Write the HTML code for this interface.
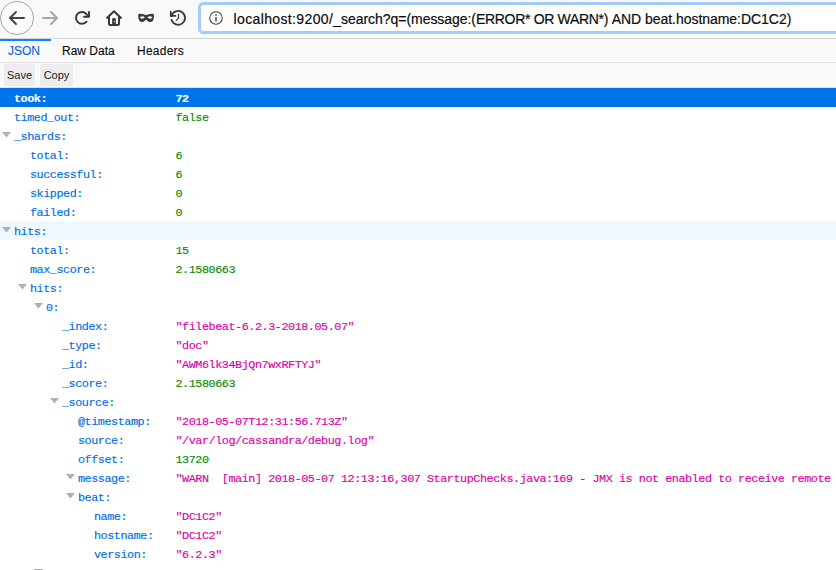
<!DOCTYPE html>
<html><head><meta charset="utf-8">
<style>
html,body{margin:0;padding:0;}
body{width:836px;height:570px;overflow:hidden;background:#fff;position:relative;font-family:"Liberation Sans",sans-serif;}
#nav{position:absolute;left:0;top:0;width:836px;height:39px;background:#f9f9fa;border-bottom:1px solid #d4d4d5;box-sizing:border-box;}
#back{position:absolute;left:0.4px;top:1.2px;width:31.6px;height:31.6px;border:1px solid #a4a4a6;border-radius:50%;background:#fcfcfc;box-sizing:content-box;}
#url{position:absolute;left:198px;top:2px;width:660px;height:32px;box-sizing:border-box;border:3px solid #a1ccfb;border-radius:5.5px;background:#fff;}
#urltext{position:absolute;left:233.5px;top:11px;-webkit-text-stroke:0.2px;font-size:14px;color:#0c0c0d;white-space:nowrap;line-height:16px;}
svg{position:absolute;overflow:visible;}
#tabs{position:absolute;left:0;top:39px;width:836px;height:24px;background:#f9f9fa;border-bottom:1px solid #e0e0e2;box-sizing:border-box;}
.tab{position:absolute;top:5px;-webkit-text-stroke:0.12px;font-size:12px;color:#0c0c0d;line-height:14px;white-space:nowrap;}
#tabline{position:absolute;left:0;top:0;width:51px;height:2px;background:#0a84ff;}
#tools{position:absolute;left:0;top:63px;width:836px;height:25px;background:#f9f9fa;border-bottom:1px solid #e0e0e2;box-sizing:border-box;}
.btn{position:absolute;top:1px;height:22px;background:#ededf0;border-radius:2px;font-size:11px;line-height:23px;color:#18191a;text-align:center;}
#tree{position:absolute;left:0;top:88px;width:836px;font-family:"Liberation Mono",monospace;font-size:11.8px;letter-spacing:-0.461px;}
.r{position:relative;height:19px;line-height:19px;white-space:nowrap;-webkit-text-stroke:0.15px;}
.k{position:absolute;top:2px;color:#006ee0;}
.v{position:absolute;left:175.5px;top:2px;}
.n{color:#058b00;}
.s{color:#db00a5;}
.sel{background:#0074e8;}
.sel .k,.sel .v{color:#fff;font-weight:bold;}
.hov{background:#f0f9fe;}
.a{position:absolute;top:6px;width:9px;height:5.5px;background:#b0b0b2;clip-path:polygon(0 0,100% 0,50% 100%);}
</style></head><body>
<div id="nav">
 <div id="back"></div>
 <svg id="i-back" style="left:9px;top:10px" width="16" height="16" viewBox="0 0 16 16"><path d="M15 7H3.414l4.293-4.293a1 1 0 0 0-1.414-1.414l-6 6a1 1 0 0 0 0 1.414l6 6a1 1 0 0 0 1.414-1.414L3.414 9H15a1 1 0 0 0 0-2z" fill="#434345"/></svg>
 <svg id="i-fwd" style="left:42px;top:10px" width="16" height="16" viewBox="0 0 16 16"><path transform="translate(16 0) scale(-1 1)" d="M15 7H3.414l4.293-4.293a1 1 0 0 0-1.414-1.414l-6 6a1 1 0 0 0 0 1.414l6 6a1 1 0 0 0 1.414-1.414L3.414 9H15a1 1 0 0 0 0-2z" fill="#a6a6a8"/></svg>
 <svg id="i-rel" style="left:74px;top:10px" width="16" height="16" viewBox="0 0 16 16"><path d="M12.56 11.72A5.95 5.95 0 1 1 12.87 4.49" fill="none" stroke="#38383a" stroke-width="1.95" stroke-linecap="round"/><path d="M15 1.9V6.7H10.1" fill="none" stroke="#38383a" stroke-width="1.9" stroke-linecap="round" stroke-linejoin="round"/><path d="M15 3.2V6.7H11.4Z" fill="#38383a"/></svg>
 <svg id="i-home" style="left:106px;top:10px" width="16" height="16" viewBox="0 0 16 16"><path d="M1 7.9L8 1.3l7 6.6" fill="none" stroke="#38383a" stroke-width="2" stroke-linecap="round" stroke-linejoin="round"/><path d="M3 6.6V14.1a0.8 0.8 0 0 0 0.8 0.8H12.2a0.8 0.8 0 0 0 0.8-0.8V6.6" fill="none" stroke="#38383a" stroke-width="2"/><rect x="6.2" y="8.2" width="3.6" height="6" fill="#38383a"/><circle cx="8.5" cy="11.5" r="0.55" fill="#f9f9fa"/></svg>
 <svg id="i-mask" style="left:138px;top:13px" width="16" height="10" viewBox="0 0 16 10"><path d="M0.3 1.8C0.3 1.1 1 0.8 2 0.8C4.5 0.8 6.5 2 8.1 2C9.7 2 11.7 0.8 14.2 0.8C15.2 0.8 15.9 1.1 15.9 1.8C16.1 4 15.9 6 15 7.4C14.2 8.6 13 9 11.8 9C10 9 9.2 6.9 8.1 6.9C7 6.9 6.2 9 4.4 9C3.2 9 2 8.6 1.2 7.4C0.3 6 0.1 4 0.3 1.8Z" fill="#3a3a3c"/><path d="M1.9 4.4C3 3 5.5 2.9 6.8 4.6C5.5 6 3 6 1.9 4.4ZM14.3 4.4C13.2 3 10.7 2.9 9.4 4.6C10.7 6 13.2 6 14.3 4.4Z" fill="#f9f9fa"/></svg>
 <svg id="i-hist" style="left:170px;top:10px" width="16" height="16" viewBox="0 0 16 16"><path d="M1.45 6A6.9 6.9 0 1 1 1.5 9.82" fill="none" stroke="#38383a" stroke-width="1.8" stroke-linecap="round"/><path d="M0.8 1.7V5.9H5.5" fill="none" stroke="#38383a" stroke-width="1.7" stroke-linecap="round" stroke-linejoin="round"/><path d="M8.5 4.4V8.2L6.3 10.4" fill="none" stroke="#38383a" stroke-width="1.2" stroke-linecap="round" stroke-linejoin="round"/></svg>
 <div id="url"></div>
 <svg id="i-info" style="left:209px;top:11px" width="14" height="14" viewBox="0 0 14 14"><circle cx="7" cy="7" r="6.3" fill="none" stroke="#3e3e42" stroke-width="1.05"/><rect x="6.3" y="6" width="1.4" height="4.4" fill="#3e3e42"/><rect x="6.3" y="3.4" width="1.4" height="1.5" fill="#3e3e42"/></svg>
 <div id="urltext"><span style="letter-spacing:0.37px">localhost:9200/</span><span style="letter-spacing:-0.03px">_search?q=</span><span style="letter-spacing:-0.06px">(message:(</span><span style="letter-spacing:-0.31px">ERROR* OR WARN*) </span><span style="letter-spacing:-0.04px">AND beat.hostname:DC1C2)</span></div>
</div>
<div id="tabs">
 <div id="tabline"></div>
 <div class="tab" style="left:8px;color:#0a64d8">JSON</div>
 <div class="tab" style="left:62px">Raw Data</div>
 <div class="tab" style="left:137px;letter-spacing:0.25px">Headers</div>
</div>
<div id="tools">
 <div class="btn" style="left:4px;width:31px">Save</div>
 <div class="btn" style="left:40px;width:33px">Copy</div>
</div>
<div id="tree">
 <div class="r sel"><span class="k" style="left:14px">took:</span><span class="v">72</span></div>
 <div class="r"><span class="k" style="left:14px">timed_out:</span><span class="v n">false</span></div>
 <div class="r"><i class="a" style="left:2px"></i><span class="k" style="left:14px">_shards:</span></div>
 <div class="r"><span class="k" style="left:30px">total:</span><span class="v n">6</span></div>
 <div class="r"><span class="k" style="left:30px">successful:</span><span class="v n">6</span></div>
 <div class="r"><span class="k" style="left:30px">skipped:</span><span class="v n">0</span></div>
 <div class="r"><span class="k" style="left:30px">failed:</span><span class="v n">0</span></div>
 <div class="r hov"><i class="a" style="left:2px"></i><span class="k" style="left:14px">hits:</span></div>
 <div class="r"><span class="k" style="left:30px">total:</span><span class="v n">15</span></div>
 <div class="r"><span class="k" style="left:30px">max_score:</span><span class="v n">2.1580663</span></div>
 <div class="r"><i class="a" style="left:18px"></i><span class="k" style="left:30px">hits:</span></div>
 <div class="r"><i class="a" style="left:34px"></i><span class="k" style="left:46px">0:</span></div>
 <div class="r"><span class="k" style="left:62px">_index:</span><span class="v s">"filebeat-6.2.3-2018.05.07"</span></div>
 <div class="r"><span class="k" style="left:62px">_type:</span><span class="v s">"doc"</span></div>
 <div class="r"><span class="k" style="left:62px">_id:</span><span class="v s">"AWM6lk34BjQn7wxRFTYJ"</span></div>
 <div class="r"><span class="k" style="left:62px">_score:</span><span class="v n">2.1580663</span></div>
 <div class="r"><i class="a" style="left:50px"></i><span class="k" style="left:62px">_source:</span></div>
 <div class="r"><span class="k" style="left:78px">@timestamp:</span><span class="v s">"2018-05-07T12:31:56.713Z"</span></div>
 <div class="r"><span class="k" style="left:78px">source:</span><span class="v s">"/var/log/cassandra/debug.log"</span></div>
 <div class="r"><span class="k" style="left:78px">offset:</span><span class="v n">13720</span></div>
 <div class="r"><i class="a" style="left:66px"></i><span class="k" style="left:78px">message:</span><span class="v s">"WARN&nbsp; [main] 2018-05-07 12:13:16,307 StartupChecks.java:169 - JMX is not enabled to receive remote connections.</span></div>
 <div class="r"><i class="a" style="left:66px"></i><span class="k" style="left:78px">beat:</span></div>
 <div class="r"><span class="k" style="left:94px">name:</span><span class="v s">"DC1C2"</span></div>
 <div class="r"><span class="k" style="left:94px">hostname:</span><span class="v s">"DC1C2"</span></div>
 <div class="r"><span class="k" style="left:94px">version:</span><span class="v s">"6.2.3"</span></div>
 <div class="r"><i class="a" style="left:34px"></i><span class="k" style="left:46px">1:</span></div>
</div>
</body></html>
